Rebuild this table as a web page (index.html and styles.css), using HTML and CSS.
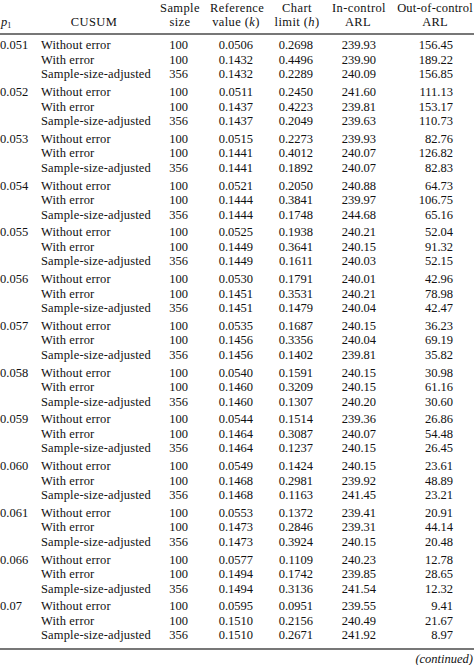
FILE: index.html
```html
<!DOCTYPE html>
<html>
<head>
<meta charset="utf-8">
<link rel="stylesheet" href="styles.css">
</head>
<body>
<div class="table">
  <div class="head">
    <div class="h c1"><span class="it">p</span><sub>1</sub></div>
    <div class="h c2">CUSUM</div>
    <div class="h c3">Sample<br>size</div>
    <div class="h c4">Reference<br>value (<span class="it">k</span>)</div>
    <div class="h c5">Chart<br>limit (<span class="it">h</span>)</div>
    <div class="h c6">In-control<br>ARL</div>
    <div class="h c7">Out-of-control<br>ARL</div>
  </div>
  <div class="body" id="body"></div>
  <div class="foot"><span class="it">(continued)</span></div>
</div>
<script>
var data = [
 ["0.051",[["0.0506","0.2698","239.93","156.45"],["0.1432","0.4496","239.90","189.22"],["0.1432","0.2289","240.09","156.85"]]],
 ["0.052",[["0.0511","0.2450","241.60","111.13"],["0.1437","0.4223","239.81","153.17"],["0.1437","0.2049","239.63","110.73"]]],
 ["0.053",[["0.0515","0.2273","239.93","82.76"],["0.1441","0.4012","240.07","126.82"],["0.1441","0.1892","240.07","82.83"]]],
 ["0.054",[["0.0521","0.2050","240.88","64.73"],["0.1444","0.3841","239.97","106.75"],["0.1444","0.1748","244.68","65.16"]]],
 ["0.055",[["0.0525","0.1938","240.21","52.04"],["0.1449","0.3641","240.15","91.32"],["0.1449","0.1611","240.03","52.15"]]],
 ["0.056",[["0.0530","0.1791","240.01","42.96"],["0.1451","0.3531","240.21","78.98"],["0.1451","0.1479","240.04","42.47"]]],
 ["0.057",[["0.0535","0.1687","240.15","36.23"],["0.1456","0.3356","240.04","69.19"],["0.1456","0.1402","239.81","35.82"]]],
 ["0.058",[["0.0540","0.1591","240.15","30.98"],["0.1460","0.3209","240.15","61.16"],["0.1460","0.1307","240.20","30.60"]]],
 ["0.059",[["0.0544","0.1514","239.36","26.86"],["0.1464","0.3087","240.07","54.48"],["0.1464","0.1237","240.15","26.45"]]],
 ["0.060",[["0.0549","0.1424","240.15","23.61"],["0.1468","0.2981","239.92","48.89"],["0.1468","0.1163","241.45","23.21"]]],
 ["0.061",[["0.0553","0.1372","239.41","20.91"],["0.1473","0.2846","239.31","44.14"],["0.1473","0.3924","240.15","20.48"]]],
 ["0.066",[["0.0577","0.1109","240.23","12.78"],["0.1494","0.1742","239.85","28.65"],["0.1494","0.3136","241.54","12.32"]]],
 ["0.07",[["0.0595","0.0951","239.55","9.41"],["0.1510","0.2156","240.49","21.67"],["0.1510","0.2671","241.92","8.97"]]]
];
var labels = ["Without error","With error","Sample-size-adjusted"];
var sizes = ["100","100","356"];
var body = document.getElementById("body");
data.forEach(function(g){
  var grp = document.createElement("div");
  grp.className = "group";
  g[1].forEach(function(r,i){
    var row = document.createElement("div");
    row.className = "row";
    var cells = [i===0?g[0]:"", labels[i], sizes[i]].concat(r);
    cells.forEach(function(t,j){
      var c = document.createElement("div");
      c.className = "d c"+(j+1);
      c.textContent = t;
      row.appendChild(c);
    });
    grp.appendChild(row);
  });
  body.appendChild(grp);
});
</script>
</body>
</html>
```
FILE: styles.css
```css
html, body {
  margin: 0;
  padding: 0;
  background: #fff;
  overflow: hidden;
}
body {
  font-family: "Liberation Serif", "Times New Roman", serif;
  font-size: 12.5px;
  color: #111;
  width: 474px;
}
.table {
  width: 474px;
}
.head, .row {
  display: grid;
  grid-template-columns: 38px 112px 60px 52px 70px 56px 86px;
}
.head {
  height: 33px;
  border-bottom: 2px solid #777;
  align-items: end;
}
.h {
  text-align: center;
  line-height: 13.5px;
  padding-bottom: 4px;
  white-space: nowrap;
  letter-spacing: 0.4px;
}
.h.c1 {
  text-align: left;
  padding-left: 1px;
  letter-spacing: 0;
}
.h.c6 {
  padding-right: 4px;
}
.h.c7 {
  padding-left: 8px;
  letter-spacing: 0.2px;
}
.h sub {
  font-size: 8px;
  vertical-align: -2px;
  line-height: 0;
}
.it { font-style: italic; }
.body {
  padding-top: 0;
  padding-bottom: 5px;
  border-bottom: 2px solid #777;
}
.group {
  padding-top: 3.25px;
}
.row {
  height: 14.5px;
  line-height: 14.5px;
}
.d { white-space: nowrap; }
.d.c1 { text-align: left; }
.d.c2 { padding-left: 3px; letter-spacing: 0.15px; }
.d.c3 { text-align: right; padding-right: 22px; }
.d.c4 { text-align: right; padding-right: 9px; }
.d.c5 { text-align: right; padding-right: 19px; }
.d.c6 { text-align: right; padding-right: 12px; }
.d.c7 { text-align: right; padding-right: 21px; }
.foot {
  text-align: right;
  line-height: 14px;
  padding-top: 2px;
  padding-right: 1px;
}
```
